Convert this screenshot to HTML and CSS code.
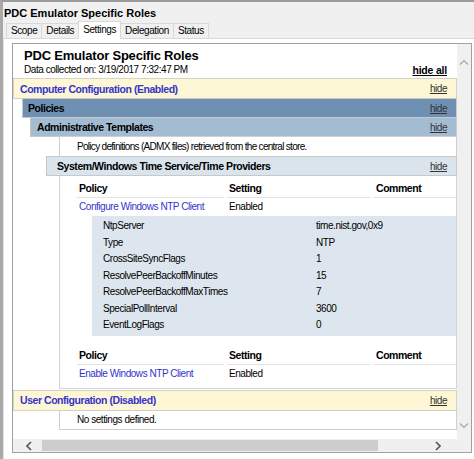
FILE: index.html
```html
<!DOCTYPE html>
<html>
<head>
<meta charset="utf-8">
<link rel="stylesheet" href="styles.css">
</head>
<body>
<div class="window">
  <div class="title">PDC Emulator Specific Roles</div>
  <div class="tabs">
    <span class="tab">Scope</span>
    <span class="tab">Details</span>
    <span class="tab active">Settings</span>
    <span class="tab">Delegation</span>
    <span class="tab">Status</span>
  </div>
  <div class="panel">
    <div class="frame">
      <div class="viewport">
        <div class="report">
          <div class="rhead">
            <div class="rtitle">PDC Emulator Specific Roles</div>
            <div class="rsub"><span>Data collected on: 3/19/2017 7:32:47 PM</span><span class="hideall">hide all</span></div>
          </div>
          <div class="band he0"><span>Computer Configuration (Enabled)</span><span class="hide">hide</span></div>
          <div class="band he1"><span>Policies</span><span class="hide">hide</span></div>
          <div class="band he2"><span>Administrative Templates</span><span class="hide">hide</span></div>
          <div class="info tight">Policy definitions (ADMX files) retrieved from the central store.</div>
          <div class="band he3"><span>System/Windows Time Service/Time Providers</span><span class="hide">hide</span></div>
          <div class="container">
            <div class="ptable">
              <div class="th">Policy</div><div class="th">Setting</div><div class="th">Comment</div>
              <div class="td link">Configure Windows NTP Client</div><div class="td">Enabled</div><div class="td"></div>
              <div class="sub">
                <span>NtpServer</span><span>time.nist.gov,0x9</span>
                <span>Type</span><span>NTP</span>
                <span>CrossSiteSyncFlags</span><span>1</span>
                <span>ResolvePeerBackoffMinutes</span><span>15</span>
                <span>ResolvePeerBackoffMaxTimes</span><span>7</span>
                <span>SpecialPollInterval</span><span>3600</span>
                <span>EventLogFlags</span><span>0</span>
              </div>
            </div>
            <div class="ptable">
              <div class="th">Policy</div><div class="th">Setting</div><div class="th">Comment</div>
              <div class="td link">Enable Windows NTP Client</div><div class="td">Enabled</div><div class="td"></div>
            </div>
          </div>
          <div class="band he0 user"><span>User Configuration (Disabled)</span><span class="hide">hide</span></div>
          <div class="info short">No settings defined.</div>
        </div>
      </div>
      <div class="vscroll">
        <svg width="10" height="6" viewBox="0 0 10 6"><polyline points="1,5.5 5,1.5 9,5.5" fill="none" stroke="#a6a6a6" stroke-width="1.2"/></svg>
        <svg width="10" height="6" viewBox="0 0 10 6"><polyline points="1,0.5 5,4.5 9,0.5" fill="none" stroke="#a6a6a6" stroke-width="1.2"/></svg>
      </div>
      <div class="hscroll">
        <div class="hbtn left"><svg width="6" height="10" viewBox="0 0 6 10"><polyline points="5,1 1,5 5,9" fill="none" stroke="#5a5a5a" stroke-width="1.7"/></svg></div>
        <div class="thumb"></div>
        <div class="track"></div>
        <div class="hbtn right"><svg width="6" height="10" viewBox="0 0 6 10"><polyline points="1,1 5,5 1,9" fill="none" stroke="#5a5a5a" stroke-width="1.7"/></svg></div>
      </div>
      <div class="corner"></div>
    </div>
  </div>
</div>
</body>
</html>
```

FILE: styles.css
```css
body {
  margin: 0;
  background: #f0f0f0;
  font-family: "Liberation Sans", Arial, sans-serif;
  color: #000;
}

.window {
  width: 471px;
  height: 457px;
  border-top: 2px solid #9b9b9b;
  border-left: 3px solid #a9a9a9;
  background: #f0f0f0;
  display: flex;
  flex-direction: column;
}

.title {
  padding: 4px 0 0 1px;
  height: 14px;
  line-height: 14px;
  font-size: 11px;
  font-weight: bold;
}

.tabs {
  display: flex;
  align-items: flex-end;
  height: 18px;
  padding-left: 3px;
  position: relative;
  z-index: 1;
}

.tab {
  height: 15px;
  box-sizing: border-box;
  padding: 0 4px;
  border: 1px solid #d9d9d9;
  border-bottom: none;
  margin-right: -1px;
  font-size: 10px;
  letter-spacing: -0.4px;
  line-height: 14px;
  background: #f0f0f0;
}

.tab.active {
  height: 18px;
  margin-bottom: -1px;
  background: #fff;
  line-height: 16px;
  position: relative;
  z-index: 2;
}

.panel {
  flex: 1;
  background: #fff;
  border-top: 1px solid #d9d9d9;
  border-left: 1px solid #e3e3e3;
  padding: 4px 2px 0 8px;
}

.frame {
  width: 460px;
  height: 410px;
  box-sizing: border-box;
  border: 1px solid #a0a0a0;
  display: grid;
  grid-template-columns: 444px 14px;
  grid-template-rows: 395px 13px;
}

.viewport {
  overflow: hidden;
  background: #fff;
}

.report {
  width: 444px;
}

.rhead {
  padding: 5px 10px 0 11px;
}

.rtitle {
  height: 13px;
  font-size: 13px;
  font-weight: bold;
  letter-spacing: -0.2px;
  line-height: 13px;
}

.rsub {
  display: flex;
  justify-content: space-between;
  align-items: center;
  height: 12px;
  margin: 2px 0 2px;
  line-height: 12px;
  font-size: 10px;
  letter-spacing: -0.45px;
}

.hideall {
  font-size: 10.5px;
  line-height: 12px;
  font-weight: bold;
  letter-spacing: -0.2px;
  text-decoration: underline;
}

.band {
  display: flex;
  justify-content: space-between;
  align-items: center;
  box-sizing: border-box;
  height: 20px;
  border: 1px solid #c8c8c8;
  margin-bottom: -1px;
  padding: 0 9px 0 6px;
  font-size: 10.5px;
  font-weight: bold;
  letter-spacing: -0.45px;
  position: relative;
}

.hide {
  font-weight: normal;
  font-size: 10px;
  letter-spacing: -0.45px;
  color: #333;
  text-decoration: underline;
}

.he0 {
  height: 21px;
  background: #fef7d6;
  border-color: #d6d3c4;
  color: #3333cc;
}

.he1 {
  margin-left: 9px;
  padding-left: 5px;
  background: #6d90b3;
}

.he2 {
  margin-left: 17px;
  background: #a4bcd1;
}

.he3 {
  margin-left: 33px;
  padding-left: 10px;
  background: #dae4ed;
  margin-bottom: 0;
}

.info {
  margin-left: 46px;
  height: 21px;
  box-sizing: border-box;
  border: 1px solid #cfcfcf;
  margin-bottom: -1px;
  padding-left: 17px;
  display: flex;
  align-items: center;
  font-size: 10px;
  letter-spacing: -0.45px;
  background: #fff;
  position: relative;
}

.info.tight {
  letter-spacing: -0.7px;
}

.info.short {
  height: 20px;
}

.container {
  margin-left: 46px;
  border: 1px solid #d4d4d4;
  border-top: none;
  padding: 3px 0 6px 17px;
}

.ptable {
  display: grid;
  grid-template-columns: 147px 144px 1fr;
  column-gap: 3px;
}

.th {
  height: 19px;
  box-sizing: border-box;
  border-bottom: 1px solid #e2e2e2;
  padding: 1px 0 0 2px;
  line-height: 16px;
  font-size: 10.5px;
  font-weight: bold;
  letter-spacing: -0.45px;
}

.td {
  height: 17px;
  line-height: 17px;
  padding-left: 2px;
  font-size: 10px;
  letter-spacing: -0.45px;
}

.td.link {
  color: #3333cc;
}

.sub {
  grid-column: 1 / -1;
  margin: 1px 0 10px 15px;
  background: #dde6ee;
  padding: 2px 0 2px 11px;
  display: grid;
  grid-template-columns: 213px 1fr;
  line-height: 16.5px;
  font-size: 10px;
  letter-spacing: -0.45px;
}

.user {
  margin-top: 1px;
}

.vscroll {
  background: #f0f0f0;
  display: flex;
  flex-direction: column;
  justify-content: space-between;
  align-items: center;
  padding: 15px 0 10px;
}

.hscroll {
  background: #f0f0f0;
  display: flex;
  align-items: stretch;
}

.hbtn {
  width: 29px;
  display: flex;
  align-items: center;
}

.hbtn.left {
  padding-left: 13px;
  box-sizing: border-box;
}

.hbtn.right {
  padding-left: 7px;
  box-sizing: border-box;
}

.thumb {
  width: 336px;
  background: #cdcdcd;
  margin: 1px 0;
}

.track {
  flex: 1;
}

.corner {
  background: #f0f0f0;
}
```
